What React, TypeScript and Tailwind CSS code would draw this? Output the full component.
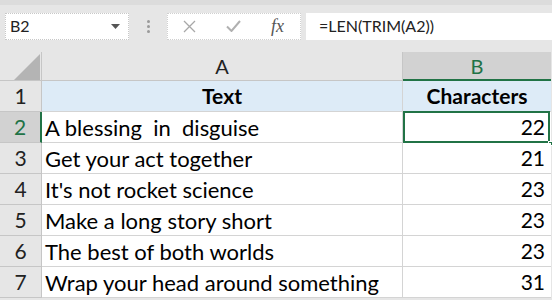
import React from "react";

const rows: [string, string][] = [
  ["A blessing  in  disguise", "22"],
  ["Get your act together", "21"],
  ["It's not rocket science", "23"],
  ["Make a long story short", "23"],
  ["The best of both worlds", "23"],
  ["Wrap your head around something", "31"],
];

export default function App() {
  const font = { fontFamily: "Lato, 'Open Sans', sans-serif" };
  return (
    <div className="w-[552px] h-[300px] overflow-hidden bg-[#e6e6e6]" style={font}>
      {/* top strip */}
      <div className="h-[5px] bg-[#dcdcdc]" />
      {/* formula bar */}
      <div className="flex items-center h-[28px] mt-[7px] pl-[5px]">
        <div className="w-[124px] h-[27px] bg-white border border-dotted border-[#c8c8c8] flex items-center justify-between pl-[4px] pr-[8px]">
          <span className="text-[16px] text-[#222]">B2</span>
          <svg width="9" height="5" viewBox="0 0 9 5"><path d="M0 0 H9 L4.5 5 Z" fill="#555" /></svg>
        </div>
        <div className="w-[38px] flex flex-col items-center justify-center gap-[2px]">
          <span className="w-[3px] h-[3px] rounded-full bg-[#9a9a9a]" />
          <span className="w-[3px] h-[3px] rounded-full bg-[#9a9a9a]" />
          <span className="w-[3px] h-[3px] rounded-full bg-[#9a9a9a]" />
        </div>
        <div className="w-[134px] h-[27px] bg-white border border-dotted border-[#d0d0d0] flex items-center pl-[15px]">
          <svg width="13" height="13" viewBox="0 0 13 13"><path d="M1 1 L12 12 M12 1 L1 12" stroke="#a8a8a8" strokeWidth="1.3" /></svg>
          <svg className="ml-[30px]" width="15" height="12" viewBox="0 0 15 12"><path d="M1 6.5 L5.5 11 L14 1" stroke="#b0b0b0" strokeWidth="2" fill="none" /></svg>
          <span className="ml-[30px] text-[18px] italic text-[#555]" style={{ fontFamily: "'Liberation Serif', serif" }}>fx</span>
        </div>
        <div className="flex-1 h-[27px] ml-[5px] bg-white flex items-center pl-[13px]">
          <span className="text-[16px] text-[#222]">=LEN(TRIM(A2))</span>
        </div>
      </div>
      {/* sheet */}
      <div className="mt-[12px] grid grid-cols-[42px_361px_148px]">
        {/* header row */}
        <div className="h-[29px] relative border-r border-b border-[#c6c6c6] bg-[#e6e6e6]">
          <svg className="absolute left-[14px] top-[2px]" width="26" height="26" viewBox="0 0 26 26"><path d="M26 0 V26 H0 Z" fill="#b4b4b4" /></svg>
        </div>
        <div className="h-[29px] flex items-center justify-center border-r border-b border-[#c6c6c6] bg-[#e6e6e6] text-[20px] text-[#222]">A</div>
        <div className="h-[29px] flex items-center justify-center bg-[#d2d2d2] border-b-2 border-[#217346] text-[20px] text-[#217346]">B</div>
        {/* row 1 */}
        <div className="h-[31px] flex items-center justify-center border-r border-b border-[#c6c6c6] bg-[#e6e6e6] text-[21px] text-[#222]">1</div>
        <div className="h-[31px] flex items-center justify-center border-r border-b border-[#d4d4d4] bg-[#ddebf7] text-[21px] font-bold text-black">Text</div>
        <div className="h-[31px] flex items-center justify-center border-b border-[#d4d4d4] bg-[#ddebf7] text-[21px] font-bold text-black">Characters</div>
        {rows.map(([t, n], i) => {
          const active = i === 0;
          return (
            <React.Fragment key={i}>
              <div
                className={
                  active
                    ? "h-[31px] flex items-center justify-center border-r-2 border-r-[#217346] border-b border-b-[#c6c6c6] bg-[#d2d2d2] text-[21px] text-[#217346]"
                    : "h-[31px] flex items-center justify-center border-r border-b border-[#c6c6c6] bg-[#e6e6e6] text-[21px] text-[#222]"
                }
              >
                {i + 2}
              </div>
              <div className="h-[31px] flex items-center pl-[3px] border-r border-b border-[#d4d4d4] bg-white text-[22px] text-black whitespace-pre overflow-visible">
                {t}
              </div>
              <div className="h-[31px] relative flex items-center justify-end pr-[6px] border-b border-[#d4d4d4] bg-white text-[21px] text-black">
                {active && <div className="absolute left-0 top-[-1px] right-[1px] bottom-[-1px] border-2 border-[#217346]" />}
                {active && <div className="absolute right-[-2px] bottom-[-4px] w-[5px] h-[5px] bg-[#217346] border border-white" />}
                <span className="relative">{n}</span>
              </div>
            </React.Fragment>
          );
        })}
      </div>
    </div>
  );
}
